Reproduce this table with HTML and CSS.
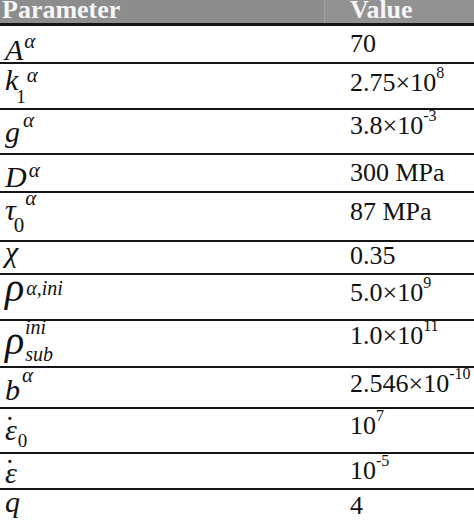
FILE: index.html
```html
<!DOCTYPE html>
<html>
<head>
<meta charset="utf-8">
<link rel="stylesheet" href="styles.css">
</head>
<body>
<div class="table">
  <div class="row head">
    <div class="p">Parameter</div>
    <div class="v">Value</div>
  </div>
  <div class="row r-a">
    <div class="p"><span class="m">A</span><span class="sup">α</span></div>
    <div class="v">70</div>
  </div>
  <div class="row r-k">
    <div class="p"><span class="m">k</span><span class="sub s-k">1</span><span class="sup s-k">α</span></div>
    <div class="v">2.75×10<span class="e">8</span></div>
  </div>
  <div class="row r-g">
    <div class="p"><span class="m">g</span><span class="sup s-g">α</span></div>
    <div class="v">3.8×10<span class="e">-3</span></div>
  </div>
  <div class="row r-d">
    <div class="p"><span class="m">D</span><span class="sup s-d">α</span></div>
    <div class="v">300 MPa</div>
  </div>
  <div class="row r-t">
    <div class="p"><span class="m">τ</span><span class="sub s-t">0</span><span class="sup s-t">α</span></div>
    <div class="v">87 MPa</div>
  </div>
  <div class="row r-c">
    <div class="p"><span class="m">χ</span></div>
    <div class="v">0.35</div>
  </div>
  <div class="row r-r">
    <div class="p"><span class="m rho">ρ</span><span class="sup s-r">α,ini</span></div>
    <div class="v">5.0×10<span class="e">9</span></div>
  </div>
  <div class="row r-rs">
    <div class="p"><span class="m rho">ρ</span><span class="sub s-rs">sub</span><span class="sup s-rs">ini</span></div>
    <div class="v">1.0×10<span class="e">11</span></div>
  </div>
  <div class="row r-b">
    <div class="p"><span class="m">b</span><span class="sup s-b">α</span></div>
    <div class="v">2.546×10<span class="e">-10</span></div>
  </div>
  <div class="row r-e0">
    <div class="p"><span class="m">ε</span><span class="dot">˙</span><span class="sub s-e">0</span></div>
    <div class="v">10<span class="e">7</span></div>
  </div>
  <div class="row r-e">
    <div class="p"><span class="m">ε</span><span class="dot">˙</span></div>
    <div class="v">10<span class="e">-5</span></div>
  </div>
  <div class="row r-q">
    <div class="p"><span class="m">q</span></div>
    <div class="v">4</div>
  </div>
</div>
</body>
</html>
```

FILE: styles.css
```css
html, body {
  margin: 0;
  padding: 0;
  background: #ffffff;
}

body {
  width: 474px;
  height: 522px;
  overflow: hidden;
  font-family: "Liberation Serif", "Times New Roman", serif;
  color: #111111;
}

.table {
  display: flex;
  flex-direction: column;
}

.row {
  display: flex;
  box-sizing: border-box;
  border-bottom: 2px solid #151515;
}

.p {
  width: 324px;
  flex: none;
  box-sizing: border-box;
  padding-left: 5px;
  font-size: 30px;
  line-height: 32px;
  font-style: italic;
  white-space: nowrap;
}

.v {
  flex: 1;
  padding-left: 26px;
  font-size: 26px;
  line-height: 26px;
  white-space: nowrap;
}

/* header */
.head {
  height: 26px;
  background: #8d8d8d;
  border-bottom: 3px solid #141414;
}

.head .p,
.head .v {
  font-size: 26px;
  font-weight: bold;
  font-style: normal;
  color: #f5f5f5;
  line-height: 18px;
  padding-top: 1px;
}

.head .p {
  padding-left: 2px;
  border-right: 1px solid #a2a2a2;
  width: 325px;
}

.head .v {
  padding-left: 25px;
  background: #929292;
}

/* math pieces */
.m {
  line-height: 0;
}

.rho {
  font-size: 40px;
}

.sup,
.sub {
  font-size: 21px;
  line-height: 0;
}

.sup {
  vertical-align: 12px;
  margin-left: 1px;
}

.sub {
  vertical-align: -12px;
  font-style: normal;
}

.dot {
  font-style: normal;
  line-height: 0;
  vertical-align: 3px;
  margin-left: -12px;
  margin-right: 3px;
}

.e {
  font-size: 16px;
  line-height: 0;
  vertical-align: 13px;
}

/* row heights and vertical placement */
.r-a { height: 38px; }
.r-a .p { padding-top: 8px; }
.r-a .v { padding-top: 5px; }

.r-k { height: 46px; }
.r-k .p { padding-top: 0; }
.r-k .v { padding-top: 6px; }
.sub.s-k { margin-left: -2px; vertical-align: -13px; font-size: 19px; }
.sup.s-k { margin-left: 1px; vertical-align: 8px; }

.r-g { height: 45px; }
.r-g .p { padding-top: 6px; }
.r-g .v { padding-top: 3px; }
.sup.s-g { vertical-align: 15px; margin-left: 3px; }

.r-d { height: 38px; }
.r-d .p { padding-top: 6px; }
.r-d .v { padding-top: 5px; }
.sup.s-d { vertical-align: 10px; margin-left: 2px; }

.r-t { height: 49px; }
.r-t .p { padding-top: 1px; }
.r-t .v { padding-top: 6px; }
.sub.s-t { margin-left: -2px; vertical-align: -12px; }
.sup.s-t { vertical-align: 15px; margin-left: 1px; }

.r-c { height: 33px; }
.r-c .p { padding-top: 0; line-height: 20px; }
.r-c .v { padding-top: 1px; }

.r-r { height: 46px; }
.r-r .p { padding-top: 0; }
.r-r .v { padding-top: 5px; }
.sup.s-r { vertical-align: 6px; margin-left: 2px; font-size: 20px; }

.r-rs { height: 47px; }
.r-rs .p { padding-top: 6px; }
.r-rs .v { padding-top: 2px; }
.sub.s-rs { font-style: italic; margin-left: 1px; vertical-align: -7px; font-size: 20px; }
.sup.s-rs { vertical-align: 20px; margin-left: -28px; font-size: 20px; }

.r-b { height: 41px; }
.r-b .p { padding-top: 6px; }
.r-b .v { padding-top: 3px; }
.sup.s-b { vertical-align: 18px; margin-left: 2px; }

.r-e0 { height: 45px; }
.r-e0 .p { padding-top: 5px; }
.r-e0 .v { padding-top: 4px; }
.sub.s-e { vertical-align: -7px; margin-left: 0; font-size: 19px; }

.r-e { height: 36px; }
.r-e .p { padding-top: 3px; }
.r-e .v { padding-top: 4px; }

.r-q { height: 40px; border-bottom: none; }
.r-q .p { padding-top: 2px; line-height: 20px; }
.r-q .v { padding-top: 3px; }
```
